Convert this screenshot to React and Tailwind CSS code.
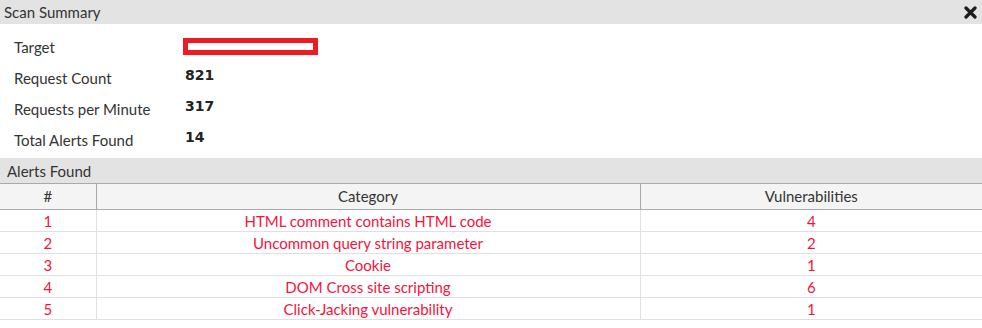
const summary = [
  { label: "Request Count", value: "821" },
  { label: "Requests per Minute", value: "317" },
  { label: "Total Alerts Found", value: "14" },
];

const alerts = [
  { id: 1, category: "HTML comment contains HTML code", count: 4 },
  { id: 2, category: "Uncommon query string parameter", count: 2 },
  { id: 3, category: "Cookie", count: 1 },
  { id: 4, category: "DOM Cross site scripting", count: 6 },
  { id: 5, category: "Click-Jacking vulnerability", count: 1 },
];

const CloseIcon = () => (
  <svg width="13" height="13" viewBox="0 0 13 13">
    <path
      d="M2 2 L11 11 M11 2 L2 11"
      stroke="#1c1c1c"
      strokeWidth="3.2"
      strokeLinecap="round"
    />
  </svg>
);

const App = () => {
  return (
    <div
      className="w-[982px] h-[328px] bg-white text-[#333] overflow-hidden"
      style={{ fontFamily: "Lato, 'Liberation Sans', sans-serif" }}
    >
      <div className="h-[24px] bg-[#e3e3e3] flex items-center justify-between pl-[4px] pr-[5px]">
        <span className="text-[15px]">Scan Summary</span>
        <CloseIcon />
      </div>

      <div className="pt-[8px] pb-[2px]">
        <div className="h-[31px] flex items-center">
          <span className="w-[183px] pl-[14px] text-[15px]">Target</span>
          <div className="w-[135px] h-[17px] border-[5px] border-[#ed1c24] bg-white mb-[3px]" />
        </div>
        {summary.map((row) => (
          <div key={row.label} className="h-[31px] flex items-center">
            <span className="w-[185px] pl-[14px] text-[15px]">{row.label}</span>
            <span
              className="text-[14px] font-bold text-[#222] pb-[6px]"
              style={{ fontFamily: "'DejaVu Sans', sans-serif" }}
            >
              {row.value}
            </span>
          </div>
        ))}
      </div>

      <div className="h-[25px] bg-[#e3e3e3] flex items-center pl-[7px] pt-[1px] text-[15px]">
        Alerts Found
      </div>

      <table className="w-full border-collapse text-[15px]">
        <thead>
          <tr className="bg-[#f4f4f4] h-[26px] border-t border-b border-[#a9a9a9] leading-[21px]">
            <th className="w-[96px] font-normal border-r border-[#a9a9a9] p-0">#</th>
            <th className="w-[544px] font-normal border-r border-[#a9a9a9] p-0">Category</th>
            <th className="font-normal p-0">Vulnerabilities</th>
          </tr>
        </thead>
        <tbody>
          {alerts.map((a) => (
            <tr key={a.id} className="h-[22px] border-b border-[#e0e0e0] text-[#f5133d] leading-[19px]">
              <td className="text-center border-r border-[#e0e0e0] p-0 pt-[2px]">{a.id}</td>
              <td className="text-center border-r border-[#e0e0e0] p-0 pt-[2px]">{a.category}</td>
              <td className="text-center p-0 pt-[2px]">{a.count}</td>
            </tr>
          ))}
        </tbody>
      </table>
    </div>
  );
};

export default App;
